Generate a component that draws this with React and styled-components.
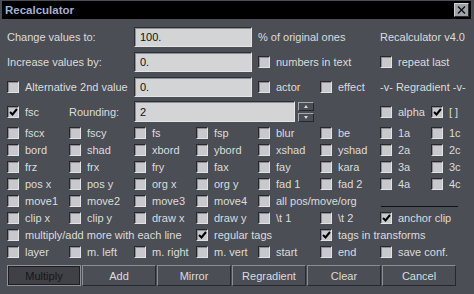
import React from 'react'
import styled, { createGlobalStyle } from 'styled-components'

const Global = createGlobalStyle`
  html, body {
    margin: 0;
    padding: 0;
    background: #4b4e55;
  }
  * { box-sizing: border-box; }
`

const Window = styled.div`
  width: 474px;
  height: 294px;
  background: #4b4e55;
  color: #dcdcdc;
  font-family: 'Liberation Sans', Arial, sans-serif;
  font-size: 11px;
  overflow: hidden;
  padding-top: 1px;
`

const TitleBar = styled.div`
  height: 18px;
  margin: 0 3px 0 2px;
  background: #000;
  display: flex;
  align-items: center;
  justify-content: space-between;
  padding: 0 2px 0 3px;
`

const Title = styled.span`
  font-weight: bold;
  font-size: 11.5px;
  color: #a3b0cf;
`

const CloseButton = styled.div`
  width: 15px;
  height: 14px;
  background: #9fa2a8;
  border: 1px solid;
  border-color: #d0d2d6 #2a2b2e #2a2b2e #d0d2d6;
  display: flex;
  align-items: center;
  justify-content: center;
`

const Body = styled.div`
  display: grid;
  grid-template-columns: 62px 65px 62px 62px 62px 60px 51px 1fr;
  grid-template-rows: 25px 25px 25px 25px repeat(8, 17px);
  padding: 5px 0 0 7px;
`

const Cell = styled.div`
  grid-column: span ${p => p.$span || 1};
  display: flex;
  align-items: center;
  white-space: nowrap;
`

const Box = styled.span`
  width: 12px;
  height: 12px;
  flex: none;
  background: #c7c9cd;
  border: 1px solid;
  border-color: #25272b #e2e3e5 #e2e3e5 #25272b;
  box-shadow: inset 1px 1px 0 #8b8e94;
  display: flex;
  align-items: center;
  justify-content: center;
  margin-right: 6px;
`

const TextInput = styled.div`
  width: ${p => p.$w}px;
  height: ${p => p.$h || 20}px;
  background: #d3d4d6;
  border: 1px solid;
  border-color: #2c2e33 #e4e5e7 #e4e5e7 #2c2e33;
  box-shadow: inset 1px 1px 0 #8d9096;
  color: #111;
  padding-left: 5px;
  display: flex;
  align-items: center;
`

const Spinner = styled.div`
  display: flex;
  flex-direction: column;
  gap: 2px;
  margin-left: 3px;
`

const SpinButton = styled.div`
  width: 16px;
  height: 9px;
  background: #4b4e55;
  border: 1px solid;
  border-color: #a5a8ae #26282c #26282c #a5a8ae;
  display: flex;
  align-items: center;
  justify-content: center;
`

const Rule = styled.div`
  grid-column: span 2;
  align-self: end;
  height: 1px;
  width: 77px;
  margin: 0 0 2px 1px;
  background: #111;
`

const ButtonRow = styled.div`
  display: flex;
  gap: 1px;
  padding: 5px 0 0 7px;
`

const Button = styled.div`
  width: 74px;
  height: 21px;
  display: flex;
  align-items: center;
  justify-content: center;
  background: ${p => (p.$active ? '#3f4146' : '#4b4e55')};
  color: ${p => (p.$active ? '#15161a' : '#dcdcdc')};
  border: 1px solid;
  border-color: ${p =>
    p.$active ? '#8d9096' : '#8a8d93 #26282c #26282c #8a8d93'};
  box-shadow: ${p => (p.$active ? 'inset 0 0 0 1px #1d1e21' : 'none')};
`

function Tick() {
  return (
    <svg width="9" height="8" viewBox="0 0 9 8">
      <path d="M1 4 L3.5 6.5 L8 1" fill="none" stroke="#000" strokeWidth="2" />
    </svg>
  )
}

function Check({ label, checked, span }) {
  return (
    <Cell $span={span}>
      <Box>{checked && <Tick />}</Box>
      {label}
    </Cell>
  )
}

const grid = [
  ['fscx', 'fscy', 'fs', 'fsp', 'blur', 'be', '1a', '1c'],
  ['bord', 'shad', 'xbord', 'ybord', 'xshad', 'yshad', '2a', '2c'],
  ['frz', 'frx', 'fry', 'fax', 'fay', 'kara', '3a', '3c'],
  ['pos x', 'pos y', 'org x', 'org y', 'fad 1', 'fad 2', '4a', '4c'],
]

export default function App() {
  return (
    <>
      <Global />
      <Window>
        <TitleBar>
          <Title>Recalculator</Title>
          <CloseButton>
            <svg width="9" height="8" viewBox="0 0 9 8">
              <path d="M1 0.5 L8 7.5 M8 0.5 L1 7.5" stroke="#111" strokeWidth="1.4" />
            </svg>
          </CloseButton>
        </TitleBar>

        <Body>
          <Cell $span={2}>Change values to:</Cell>
          <Cell $span={2}><TextInput $w={118}>100.</TextInput></Cell>
          <Cell $span={2}>% of original ones</Cell>
          <Cell $span={2}>Recalculator v4.0</Cell>

          <Cell $span={2}>Increase values by:</Cell>
          <Cell $span={2}><TextInput $w={118}>0.</TextInput></Cell>
          <Check span={2} label="numbers in text" />
          <Check span={2} label="repeat last" />

          <Check span={2} label="Alternative 2nd value" />
          <Cell $span={2}><TextInput $w={118}>0.</TextInput></Cell>
          <Check label="actor" />
          <Check label="effect" />
          <Cell $span={2}>-v- Regradient -v-</Cell>

          <Check label="fsc" checked />
          <Cell>Rounding:</Cell>
          <Cell $span={4}>
            <TextInput $w={161} $h={21}>2</TextInput>
            <Spinner>
              <SpinButton>
                <svg width="4" height="3" viewBox="0 0 4 3"><path d="M0 3 L2 0 L4 3Z" fill="#d8d8d8" /></svg>
              </SpinButton>
              <SpinButton>
                <svg width="4" height="3" viewBox="0 0 4 3"><path d="M0 0 L2 3 L4 0Z" fill="#d8d8d8" /></svg>
              </SpinButton>
            </Spinner>
          </Cell>
          <Check label="alpha" />
          <Check label="[ ]" checked />

          {grid.flat().map((l, i) => <Check key={i} label={l} />)}

          <Check label="move1" />
          <Check label="move2" />
          <Check label="move3" />
          <Check label="move4" />
          <Check span={2} label="all pos/move/org" />
          <Rule />

          <Check label="clip x" />
          <Check label="clip y" />
          <Check label="draw x" />
          <Check label="draw y" />
          <Check label="\t 1" />
          <Check label="\t 2" />
          <Check span={2} label="anchor clip" checked />

          <Check span={3} label="multiply/add more with each line" />
          <Check span={2} label="regular tags" checked />
          <Check span={3} label="tags in transforms" checked />

          <Check label="layer" />
          <Check label="m. left" />
          <Check label="m. right" />
          <Check label="m. vert" />
          <Check label="start" />
          <Check label="end" />
          <Check span={2} label="save conf." />
        </Body>

        <ButtonRow>
          <Button $active>Multiply</Button>
          <Button>Add</Button>
          <Button>Mirror</Button>
          <Button>Regradient</Button>
          <Button>Clear</Button>
          <Button>Cancel</Button>
        </ButtonRow>
      </Window>
    </>
  )
}
